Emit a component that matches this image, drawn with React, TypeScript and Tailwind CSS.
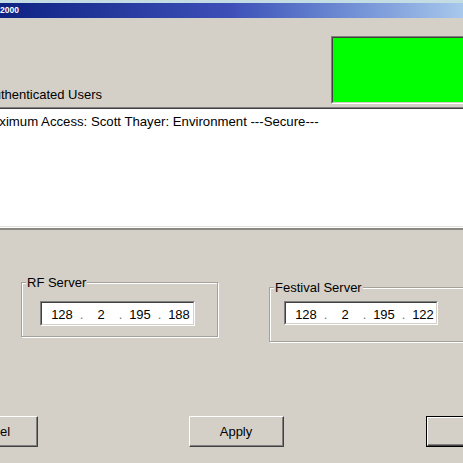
import React from 'react'

const font = { fontFamily: '"Liberation Sans", Arial, sans-serif' }

// sunken 2px edge, classic win2k style
function Sunken({ className, children }: { className?: string; children: React.ReactNode }) {
  return (
    <div className={`border-t border-l border-b border-r border-t-[#808080] border-l-[#808080] border-b-white border-r-white ${className ?? ''}`}>
      <div className="h-full border-t border-l border-b border-r border-t-[#404040] border-l-[#404040] border-b-[#d4d0c8] border-r-[#d4d0c8] bg-white">
        {children}
      </div>
    </div>
  )
}

function IpField({ parts, className }: { parts: string[]; className?: string }) {
  return (
    <Sunken className={className}>
      <div className="flex pl-[5px] pt-[4px] text-[13px] leading-[15px] text-black">
        {parts.map((p, i) => (
          <React.Fragment key={i}>
            <span className="w-[30px] shrink-0 text-center">{p}</span>
            {i < parts.length - 1 && <span className="w-[9px] shrink-0 text-center text-[#707070]">.</span>}
          </React.Fragment>
        ))}
      </div>
    </Sunken>
  )
}

function GroupBox({ title, className, children }: { title: string; className?: string; children: React.ReactNode }) {
  return (
    <fieldset className={`shrink-0 border border-[#a4a29c] shadow-[1px_1px_0_#ffffff,inset_1px_1px_0_#ffffff] ${className ?? ''}`}>
      <legend className="ml-[4px] bg-[#d4d0c8] px-[1px] text-[13px] leading-[15px] text-black">{title}</legend>
      {children}
    </fieldset>
  )
}

function WinButton({ label, isDefault, className }: { label: string; isDefault?: boolean; className?: string }) {
  return (
    <div className={`h-[31px] w-[95px] shrink-0 ${isDefault ? 'border border-black' : ''} ${className ?? ''}`}>
      <div className="h-full border-t border-l border-b border-r border-t-white border-l-white border-b-[#404040] border-r-[#404040]">
        <div className="flex h-full items-center justify-center border-b border-r border-b-[#808080] border-r-[#808080] text-[13px] leading-[15px] text-black">
          {label}
        </div>
      </div>
    </div>
  )
}

export default function App() {
  return (
    <div className="h-[463px] w-[463px] overflow-hidden bg-[#d4d0c8]" style={font}>
      {/* window caption */}
      <div className="h-[3px] bg-[#c4dde4]" />
      <div className="flex h-[15px] items-center bg-gradient-to-r from-[#0e2284] via-[#3e50b8] to-[#a8c8ec]">
        <span className="text-[8.5px] font-bold leading-none text-white">2000</span>
      </div>

      {/* status row */}
      <div className="flex h-[89px] w-[520px]">
        <div className="w-[331px] shrink-0 pt-[69px] text-[13px] leading-[15px] text-black">
          <span className="ml-[-15px] whitespace-nowrap">Authenticated Users</span>
        </div>
        <div className="mt-[18px] h-[68px] w-[160px] shrink-0 border-t border-l border-b border-r border-t-[#808080] border-l-[#808080] border-b-white border-r-white">
          <div className="h-full border-t border-l border-b border-r border-t-[#404040] border-l-[#404040] border-b-[#d4d0c8] border-r-[#d4d0c8] bg-[#00ff00]" />
        </div>
      </div>

      {/* user list */}
      <div className="h-[121px] border-t border-b border-t-[#808080] border-b-white">
        <div className="h-full border-t border-b border-t-[#404040] border-b-[#e4e2de] bg-white pt-[5px] text-[13px] leading-[15px] text-black">
          <div className="ml-[-19px] whitespace-nowrap text-[13.2px]">Maximum Access: Scott Thayer: Environment ---Secure---</div>
        </div>
      </div>
      <div className="h-[2px] bg-[#8a8882]" />

      {/* servers */}
      <div className="flex h-[186px] w-[560px] items-start pl-[21px] pt-[45px]">
        <GroupBox title="RF Server" className="w-[197px] pb-[10px]">
          <IpField parts={['128', '2', '195', '188']} className="ml-[18px] mt-[11px] h-[25px] w-[155px]" />
        </GroupBox>
        <GroupBox title="Festival Server" className="ml-[51px] mt-[5px] w-[240px] pb-[16px]">
          <IpField parts={['128', '2', '195', '122']} className="ml-[14px] mt-[6px] h-[24px] w-[154px]" />
        </GroupBox>
      </div>

      {/* buttons */}
      <div className="flex w-[600px]">
        <WinButton label="Cancel" className="ml-[-57px]" />
        <WinButton label="Apply" className="ml-[151px]" />
        <WinButton label="OK" isDefault className="ml-[142px]" />
      </div>
    </div>
  )
}
